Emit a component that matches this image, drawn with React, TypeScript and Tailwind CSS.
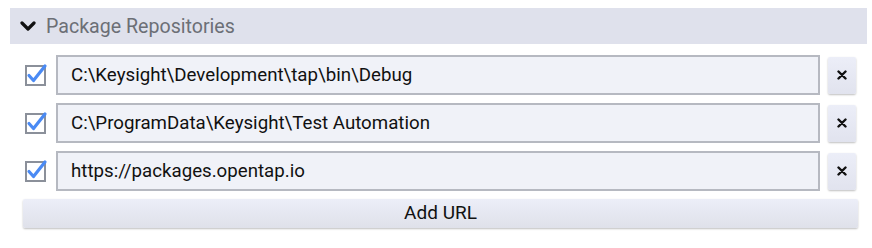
import React from 'react';

const repos = [
  'C:\\Keysight\\Development\\tap\\bin\\Debug',
  'C:\\ProgramData\\Keysight\\Test Automation',
  'https://packages.opentap.io',
];

const CheckBox = () => (
  <div className="relative w-[21px] h-[21px] shrink-0 border-2 border-[#8b909a] bg-white">
    <svg className="absolute -left-[2px] -top-[4px]" width="24" height="24" viewBox="0 0 24 24">
      <path d="M4 12.5 L8.5 17.5 L20 3" fill="none" stroke="#4a8af4" strokeWidth="3.2" strokeLinecap="round" strokeLinejoin="round" />
    </svg>
  </div>
);

const RemoveIcon = () => (
  <svg width="10" height="10" viewBox="0 0 10 10">
    <path d="M1.5 1.5 L8.5 8.5 M8.5 1.5 L1.5 8.5" stroke="#111" strokeWidth="2.4" strokeLinecap="round" />
  </svg>
);

export default function App() {
  return (
    <div className="w-[872px] h-[248px] bg-white px-[10px] pt-[8px] text-[18.7px]" style={{ fontFamily: 'Roboto, "Liberation Sans", sans-serif' }}>
      {/* Section header */}
      <div className="h-[36px] w-[857px] bg-[#dfe1ec] flex items-center pl-[10px]">
        <svg width="16" height="10" viewBox="0 0 16 10" className="mr-[10px]">
          <path d="M2 2 L8 8 L14 2" fill="none" stroke="#111" strokeWidth="3.2" strokeLinecap="round" strokeLinejoin="round" />
        </svg>
        <span className="text-[19.6px] text-[#6c6f76] pt-[1px]">Package Repositories</span>
      </div>

      {/* Repository list */}
      <div className="ml-[13px] w-[835px] mt-[11px] flex flex-col gap-[8px]">
        {repos.map((r) => (
          <div key={r} className="flex items-center h-[40px] px-[2px]">
            <CheckBox />
            <div className="ml-[10px] w-[764px] h-[40px] border-2 border-[#b6b9c1] bg-[#f0f2f8] flex items-center pl-[13px] text-[#111]">
              {r}
            </div>
            <button className="ml-[8px] w-[28px] h-[37px] bg-gradient-to-b from-[#eceef8] to-[#e1e3ee] shadow-[0_1px_2px_rgba(0,0,0,0.25)] rounded-[2px] flex items-center justify-center">
              <RemoveIcon />
            </button>
          </div>
        ))}
        <button className="h-[29px] w-full bg-gradient-to-b from-[#eceef8] to-[#dfe1ea] shadow-[0_1px_2px_rgba(0,0,0,0.25)] rounded-[2px] flex items-center justify-center text-[19px] text-[#111]">
          Add URL
        </button>
      </div>
    </div>
  );
}
